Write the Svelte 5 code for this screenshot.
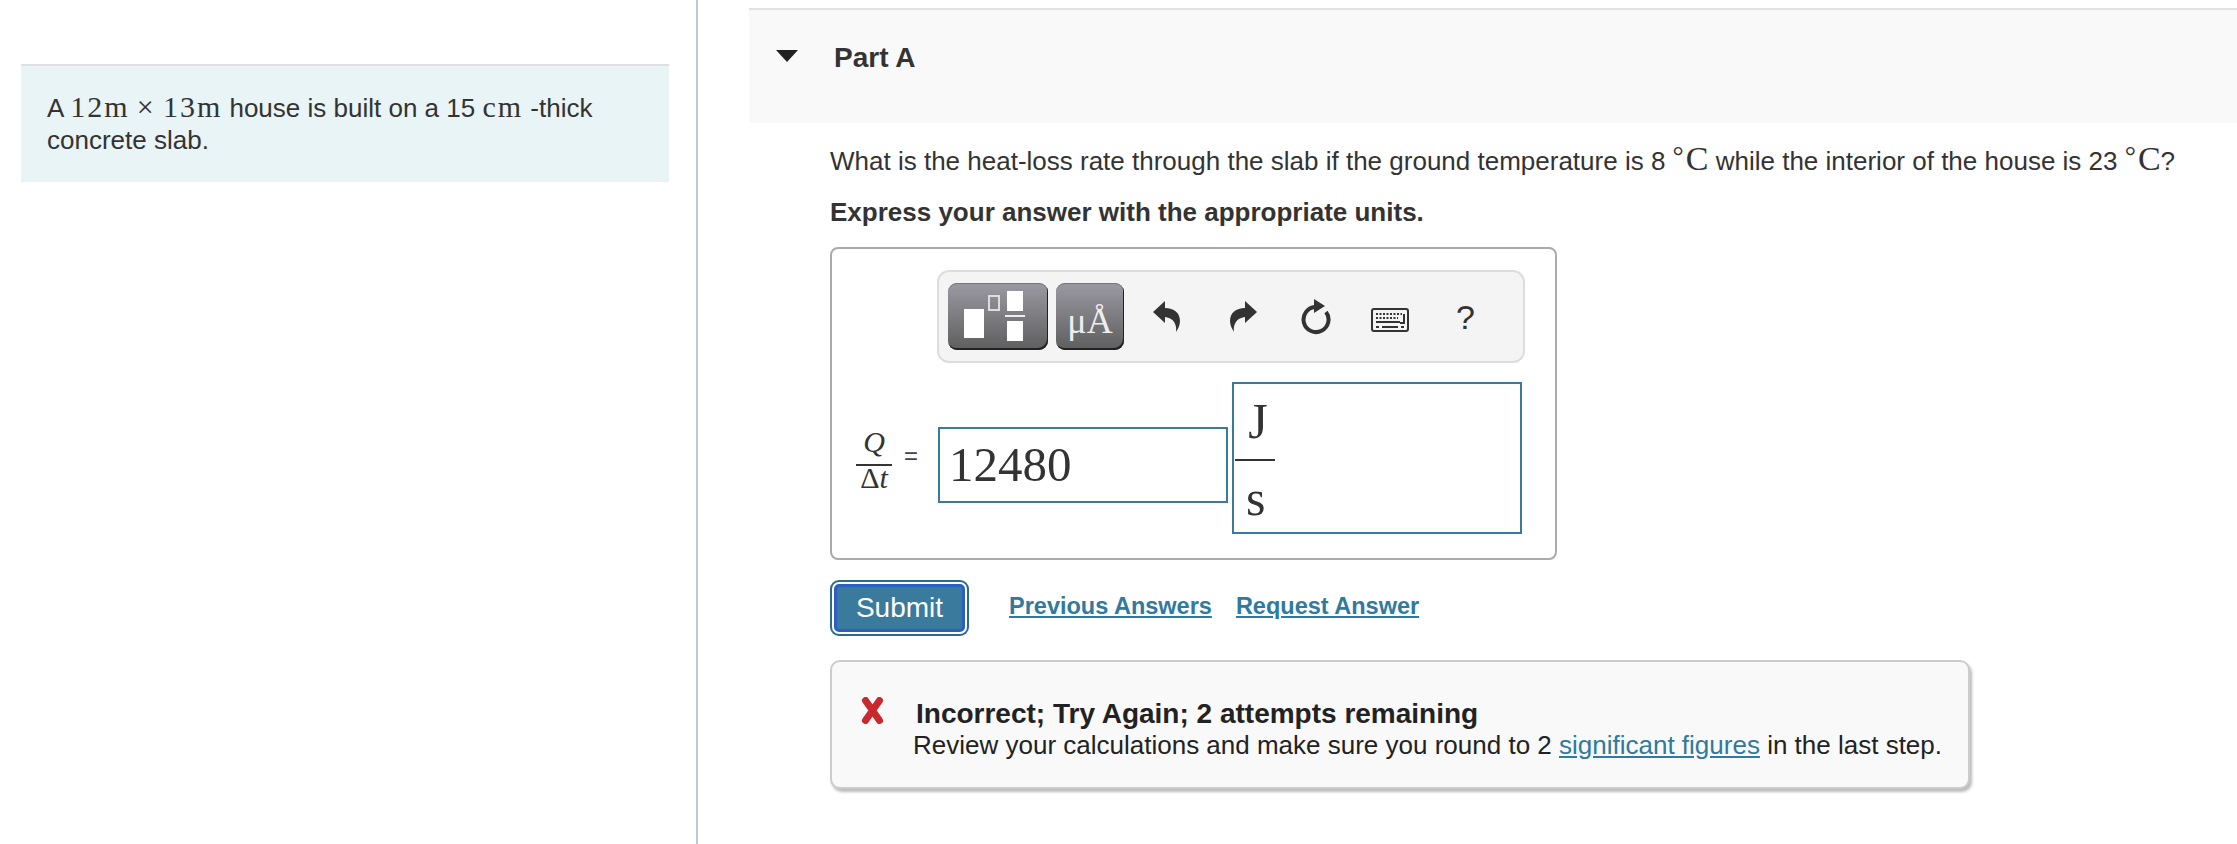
<script>
  const answer = '12480';
</script>

<div class="page">
  <aside class="intro-col">
    <div class="intro">
      A <span class="m">12m</span> <span class="m">×</span> <span class="m">13m</span> house is built on a 15 <span class="m">cm</span> -thick concrete slab.
    </div>
  </aside>

  <main class="part-col">
    <header class="part-head">
      <span class="caret"></span>
      <h2>Part A</h2>
    </header>

    <section class="part-body">
      <p class="question">What is the heat-loss rate through the slab if the ground temperature is 8 <span class="deg">°</span><span class="big">C</span> while the interior of the house is 23 <span class="deg">°</span><span class="big">C</span>?</p>
      <p class="express">Express your answer with the appropriate units.</p>

      <div class="editor">
        <div class="toolbar">
          <button class="tool tpl" aria-label="templates">
            <svg width="100" height="67" viewBox="0 0 100 67">
              <rect x="16" y="26" width="20" height="29" fill="#fff" />
              <rect x="41" y="13" width="10" height="14" fill="none" stroke="#ddd" stroke-width="2" />
              <rect x="59" y="8" width="16" height="20" fill="#fff" />
              <rect x="57" y="32" width="20" height="2" fill="#eee" />
              <rect x="59" y="38" width="16" height="20" fill="#fff" />
            </svg>
          </button>
          <button class="tool units">μÅ</button>
          <svg class="ic undo" width="27" height="31" viewBox="0 0 27 31"><path d="M0 11 12 0V7C21 7 27 12 27 20 27 24 25 28 23 31 24 24 21 17 12 16V22Z" fill="#333" /></svg>
          <svg class="ic redo" width="27" height="31" viewBox="0 0 27 31"><path d="M27 11 15 0V7C6 7 0 12 0 20 0 24 2 28 4 31 3 24 6 17 15 16V22Z" fill="#333" /></svg>
          <svg class="ic reset" width="32" height="36" viewBox="0 0 32 36">
            <path d="M15 8.100A12.500 12.500 0 1 0 26 13" fill="none" stroke="#333" stroke-width="4" />
            <path d="M14 0 25 7 14 14Z" fill="#333" />
          </svg>
          <svg class="ic kbd" width="38" height="24" viewBox="0 0 38 24">
            <rect x="1" y="1" width="36" height="22" rx="2" fill="none" stroke="#333" stroke-width="2" />
            <path d="M5 6h26M5 10h22" stroke="#333" stroke-width="2" stroke-dasharray="2 1.500" fill="none" />
            <path d="M5 14h24M33 6v9h-4" stroke="#333" stroke-width="2" fill="none" />
            <path d="M5 19h3M11 19h16M30 19h3" stroke="#333" stroke-width="2" fill="none" />
          </svg>
          <span class="help">?</span>
        </div>

        <div class="math-row">
          <div class="lhs">
            <span class="num"><i>Q</i></span>
            <span class="den">Δ<i>t</i></span>
          </div>
          <span class="eq">=</span>
          <div class="input value">{answer}</div>
          <div class="input unit">
            <div class="unit-frac">
              <span class="unit-top">J</span>
              <span class="unit-bot">s</span>
            </div>
          </div>
        </div>
      </div>

      <div class="actions">
        <button class="submit">Submit</button>
        <a href="#prev" class="link">Previous Answers</a>
        <a href="#req" class="link">Request Answer</a>
      </div>

      <div class="feedback">
        <svg class="cross" width="27" height="27" viewBox="0 0 27 27"><path d="M6.500 3.500 20.500 23.500M20.500 3.500 6.500 23.500" stroke="#c9282d" stroke-width="7" stroke-linecap="round" /></svg>
        <div class="fb-text">
          <strong>Incorrect; Try Again; 2 attempts remaining</strong>
          <p>Review your calculations and make sure you round to 2 <a href="#sf">significant figures</a> in the last step.</p>
        </div>
      </div>
    </section>
  </main>
</div>

<style>
  :global(body) {
    margin: 0;
    background: #fff;
  }

  .page {
    display: flex;
    width: 2237px;
    height: 844px;
    overflow: hidden;
    font-family: "Liberation Sans", Arial, sans-serif;
    font-size: 26px;
    color: #333;
  }

  .m {
    font-family: "Liberation Serif", serif;
    font-size: 30px;
    letter-spacing: 2px;
    line-height: 0;
  }

  .intro-col {
    box-sizing: border-box;
    width: 698px;
    flex: none;
    border-right: 2px solid #b9cbdb;
    padding: 64px 27px 0 21px;
  }

  .intro {
    box-sizing: border-box;
    height: 118px;
    background: #e9f4f7;
    border-top: 2px solid #e0dfe3;
    padding: 26px 26px;
    line-height: 32px;
  }

  .part-col {
    flex: 1;
    padding: 8px 0 0 51px;
  }

  .part-head {
    display: flex;
    align-items: flex-start;
    box-sizing: border-box;
    height: 115px;
    background: #f9f9f9;
    border-top: 2px solid #e2e2e2;
  }

  .caret {
    width: 0;
    height: 0;
    margin: 40px 0 0 27px;
    border-left: 11px solid transparent;
    border-right: 11px solid transparent;
    border-top: 12px solid #222;
  }

  h2 {
    margin: 31px 0 0 36px;
    font-size: 28px;
    line-height: 34px;
    font-weight: 700;
  }

  .part-body {
    padding-left: 81px;
  }

  .question {
    margin: 21px 0 0;
    line-height: 34px;
    white-space: nowrap;
  }

  .deg {
    font-family: "Liberation Serif", serif;
    font-size: 28px;
    line-height: 0;
    position: relative;
    top: -5px;
    margin-right: 2px;
  }

  .big {
    font-family: "Liberation Serif", serif;
    font-size: 34px;
    line-height: 0;
  }

  .express {
    margin: 17px 0 0;
    font-weight: 700;
    line-height: 34px;
  }

  .editor {
    box-sizing: border-box;
    width: 727px;
    height: 313px;
    margin-top: 18px;
    border: 2px solid #aaa;
    border-radius: 8px;
    padding: 21px 0 0 24px;
  }

  .toolbar {
    display: flex;
    align-items: center;
    box-sizing: border-box;
    width: 588px;
    height: 93px;
    margin-left: 81px;
    padding-left: 9px;
    background: #f4f4f4;
    border: 2px solid #ddd;
    border-radius: 12px;
  }

  .tool {
    box-sizing: border-box;
    height: 67px;
    padding: 0;
    border: none;
    border-radius: 9px;
    background: linear-gradient(#9b9aa3, #5e5e5e);
    box-shadow: inset -1px -2px 0 #222, inset 0 1px 0 #777;
  }

  .tpl {
    width: 100px;
  }

  .tpl svg {
    display: block;
  }

  .units {
    width: 68px;
    margin-left: 8px;
    padding-top: 10px;
    font-family: "Liberation Serif", serif;
    font-size: 36px;
    line-height: 57px;
    color: #eee;
  }

  .ic {
    flex: none;
  }

  .undo {
    margin-left: 29px;
  }

  .redo {
    margin-left: 50px;
  }

  .reset {
    margin-left: 43px;
  }

  .kbd {
    margin-left: 39px;
    margin-top: 6px;
  }

  .help {
    margin-left: 47px;
    font-size: 34px;
    line-height: 40px;
  }

  .math-row {
    display: flex;
    align-items: flex-start;
    margin-top: 19px;
    font-family: "Liberation Serif", serif;
  }

  .lhs {
    display: flex;
    flex-direction: column;
    align-items: center;
    width: 36px;
    margin-top: 44px;
    font-size: 30px;
    line-height: 32px;
  }

  .num {
    align-self: stretch;
    text-align: center;
    border-bottom: 2px solid #333;
    height: 38px;
  }

  .den {
    height: 32px;
    margin-top: -4px;
  }

  .eq {
    margin: 59px 0 0 12px;
    width: 34px;
    font-family: "Liberation Sans", sans-serif;
    font-size: 24px;
    line-height: 30px;
    color: #444;
  }

  .input {
    box-sizing: border-box;
    border: 2px solid #3a7a9c;
    background: #fff;
    flex: none;
    width: 290px;
  }

  .value {
    height: 76px;
    margin-top: 45px;
    padding-left: 9px;
    font-size: 49px;
    line-height: 72px;
  }

  .unit {
    height: 152px;
    margin-left: 4px;
    padding-left: 1px;
  }

  .unit-frac {
    display: flex;
    flex-direction: column;
    width: 40px;
    font-size: 50px;
    text-align: center;
    line-height: 54px;
  }

  .unit-top {
    height: 77px;
    padding: 10px 0 0 6px;
    box-sizing: border-box;
    border-bottom: 2px solid #333;
    margin-bottom: 10px;
  }

  .unit-bot {
    text-align: left;
    padding-left: 11px;
  }

  .actions {
    display: flex;
    align-items: flex-start;
    margin-top: 20px;
  }

  .submit {
    box-sizing: border-box;
    width: 131px;
    height: 48px;
    margin: 4px;
    padding: 0;
    background: #3a7a9c;
    border: 3px solid #2c5fc4;
    border-radius: 5px;
    outline: 2px solid #fff;
    outline-offset: 0;
    box-shadow: 0 0 0 4px #2a6a8a;
    font-family: inherit;
    font-size: 28px;
    color: #fff;
  }

  .link,
  .fb-text a {
    color: #2f7a9e;
  }

  .link {
    font-weight: 700;
    font-size: 23.5px;
    line-height: 34px;
    margin-top: 9px;
    margin-left: 24px;
  }

  .submit + .link {
    margin-left: 40px;
  }

  .feedback {
    display: flex;
    box-sizing: border-box;
    width: 1140px;
    height: 129px;
    margin-top: 24px;
    background: #f9f9f9;
    border: 2px solid #ccc;
    border-radius: 10px;
    box-shadow: 2px 3px 3px #bbb;
    padding: 35px 0 0 27px;
  }

  .fb-text {
    margin-left: 27px;
  }

  .fb-text strong {
    display: block;
    margin-left: 3px;
    font-size: 28px;
    line-height: 33px;
    color: #222;
  }

  .fb-text p {
    margin: 0;
    line-height: 31px;
    color: #222;
  }
</style>
